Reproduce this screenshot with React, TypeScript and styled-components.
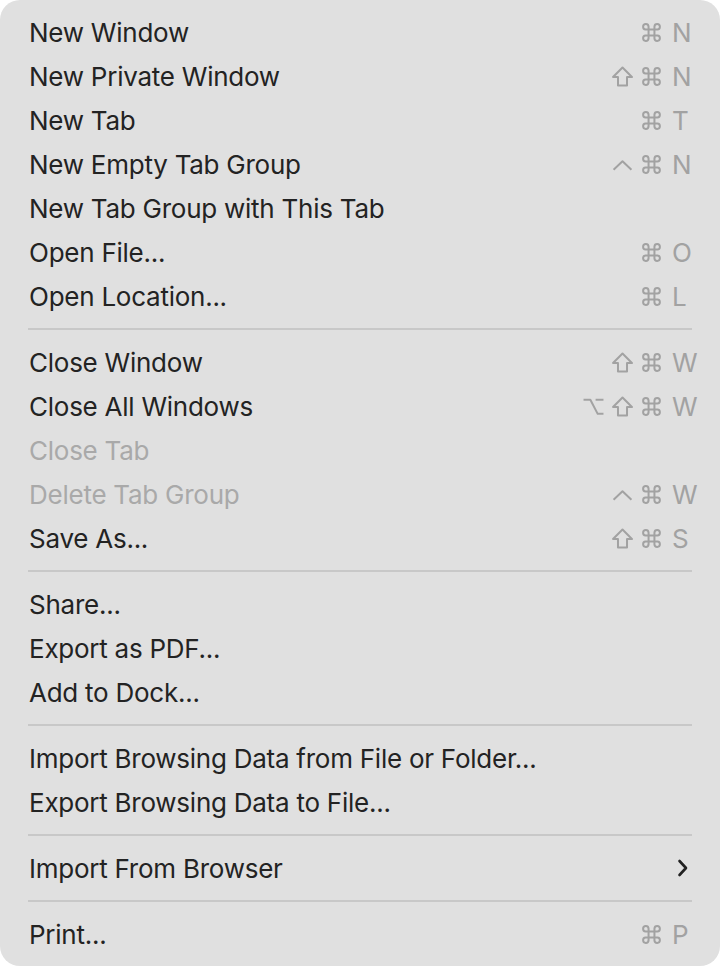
import React from "react";
import styled, { createGlobalStyle } from "styled-components";

type Mod = "cmd" | "shift" | "ctrl" | "opt";

interface Entry {
  label: string;
  mods?: Mod[];
  keyChar?: string;
  disabled?: boolean;
  submenu?: boolean;
}

const sections: Entry[][] = [
  [
    { label: "New Window", mods: ["cmd"], keyChar: "N" },
    { label: "New Private Window", mods: ["shift", "cmd"], keyChar: "N" },
    { label: "New Tab", mods: ["cmd"], keyChar: "T" },
    { label: "New Empty Tab Group", mods: ["ctrl", "cmd"], keyChar: "N" },
    { label: "New Tab Group with This Tab" },
    { label: "Open File...", mods: ["cmd"], keyChar: "O" },
    { label: "Open Location...", mods: ["cmd"], keyChar: "L" },
  ],
  [
    { label: "Close Window", mods: ["shift", "cmd"], keyChar: "W" },
    { label: "Close All Windows", mods: ["opt", "shift", "cmd"], keyChar: "W" },
    { label: "Close Tab", disabled: true },
    { label: "Delete Tab Group", mods: ["ctrl", "cmd"], keyChar: "W", disabled: true },
    { label: "Save As...", mods: ["shift", "cmd"], keyChar: "S" },
  ],
  [
    { label: "Share..." },
    { label: "Export as PDF..." },
    { label: "Add to Dock..." },
  ],
  [
    { label: "Import Browsing Data from File or Folder..." },
    { label: "Export Browsing Data to File..." },
  ],
  [{ label: "Import From Browser", submenu: true }],
  [{ label: "Print...", mods: ["cmd"], keyChar: "P" }],
];

// modifier glyphs drawn on a 20x20 grid
const modPaths: Record<Mod, string> = {
  cmd: "M7.2 7.2V4.4A2.6 2.6 0 1 0 4.4 7.2H15.6A2.6 2.6 0 1 0 12.8 4.4V15.6A2.6 2.6 0 1 0 15.6 12.8H4.4A2.6 2.6 0 1 0 7.2 15.6Z",
  shift: "M10 1.5L19 10.5H14.3V18.5H5.7V10.5H1Z",
  ctrl: "M1.5 15L10 7L18.5 15",
  opt: "M0.5 3.5H7L14 17H19.5M12 3.5H19.5",
};

const ModIcon: React.FC<{ mod: Mod }> = ({ mod }) => (
  <ModSvg viewBox="0 0 20 20">
    <path d={modPaths[mod]} />
  </ModSvg>
);

export default function App() {
  return (
    <>
      <GlobalStyle />
      <Menu>
        {sections.map((section, i) => (
          <React.Fragment key={i}>
            {i > 0 && <Separator />}
            {section.map((entry) => (
              <Item key={entry.label} $disabled={entry.disabled}>
                <span>{entry.label}</span>
                {entry.keyChar && (
                  <Shortcut>
                    {entry.mods?.map((m) => (
                      <ModIcon key={m} mod={m} />
                    ))}
                    <KeyChar>{entry.keyChar}</KeyChar>
                  </Shortcut>
                )}
                {entry.submenu && (
                  <Chevron viewBox="0 0 12 20">
                    <path d="M2.5 3L9 10L2.5 17" />
                  </Chevron>
                )}
              </Item>
            ))}
          </React.Fragment>
        ))}
      </Menu>
    </>
  );
}

const GlobalStyle = createGlobalStyle`
  html, body {
    margin: 0;
    padding: 0;
    background: #ffffff;
  }
`;

const Menu = styled.div`
  width: 720px;
  height: 966px;
  box-sizing: border-box;
  padding: 10px 0;
  background: #e0e0e0;
  border-radius: 20px;
  display: flex;
  flex-direction: column;
  font-family: Inter, "Liberation Sans", sans-serif;
  font-size: 26px;
  letter-spacing: -0.25px;
  overflow: hidden;
`;

const Item = styled.div<{ $disabled?: boolean }>`
  height: 44px;
  flex: none;
  display: flex;
  align-items: center;
  justify-content: space-between;
  padding: 0 25px 0 29px;
  color: ${(p) => (p.$disabled ? "#a9a9a9" : "#232323")};
  white-space: nowrap;
`;

const Shortcut = styled.div`
  display: flex;
  align-items: center;
  gap: 8px;
  color: #a2a2a2;
`;

const ModSvg = styled.svg`
  width: 21px;
  height: 21px;
  fill: none;
  stroke: #a2a2a2;
  stroke-width: 1.9;
  stroke-linejoin: round;
`;

const KeyChar = styled.span`
  width: 23px;
  margin-left: 2px;
  text-align: left;
  letter-spacing: 0;
`;

const Chevron = styled.svg`
  width: 12px;
  height: 20px;
  margin-right: 6px;
  fill: none;
  stroke: #222222;
  stroke-width: 2.6;
  stroke-linecap: round;
  stroke-linejoin: round;
`;

const Separator = styled.div`
  height: 22px;
  flex: none;
  display: flex;
  align-items: center;
  padding: 0 28px;

  &::after {
    content: "";
    flex: 1;
    height: 2px;
    background: #c8c8c8;
  }
`;
